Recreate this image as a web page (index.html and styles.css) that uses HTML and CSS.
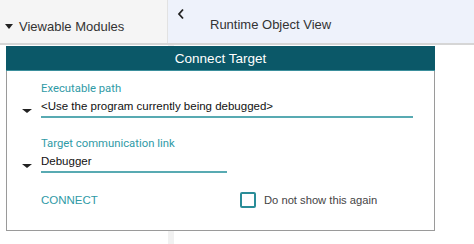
FILE: index.html
```html
<!DOCTYPE html>
<html lang="en">
<head>
    <meta charset="UTF-8">
    <meta name="viewport" content="width=device-width, initial-scale=1.0">
    <title>Connect Target</title>
    <link rel="stylesheet" href="styles.css">
</head>
<body>
    <div class="topbar">
        <div class="modules">
            <span class="caret"></span>
            <span>Viewable Modules</span>
        </div>
        <div class="runtime">
            <svg class="back" width="10" height="12" viewBox="0 0 10 12">
                <path d="M7 1.5 L3 6 L7 10.5" fill="none" stroke="#222" stroke-width="1.8"/>
            </svg>
            <span class="runtime-title">Runtime Object View</span>
        </div>
    </div>
    <div class="main">
        <div class="left-pane"></div>
        <div class="right-pane"></div>
    </div>

    <div class="dialog">
        <div class="dialog-header">Connect Target</div>
        <div class="dialog-body">
            <div class="field">
                <label class="field-label">Executable path</label>
                <div class="select-row">
                    <span class="caret small"></span>
                    <div class="select wide">&lt;Use the program currently being debugged&gt;</div>
                </div>
            </div>
            <div class="field">
                <label class="field-label">Target communication link</label>
                <div class="select-row">
                    <span class="caret small"></span>
                    <div class="select narrow">Debugger</div>
                </div>
            </div>
            <div class="actions">
                <span class="connect">CONNECT</span>
                <label class="check">
                    <span class="box"></span>
                    <span>Do not show this again</span>
                </label>
            </div>
        </div>
    </div>
</body>
</html>
```

FILE: styles.css
```css
body {
    margin: 0;
    padding: 0;
    width: 474px;
    height: 244px;
    overflow: hidden;
    font-family: "Liberation Sans", Arial, sans-serif;
    background-color: #fff;
    position: relative;
}
.topbar {
    display: flex;
    height: 43px;
    border-bottom: 2px solid #d6d6d6;
}
.modules {
    width: 168px;
    background-color: #f5f5f5;
    border-right: 1px solid #e2e2e2;
    display: flex;
    align-items: center;
    padding-left: 5px;
    padding-top: 10px;
    box-sizing: border-box;
    font-size: 13px;
    color: #333;
}
.caret {
    width: 0;
    height: 0;
    border-left: 4px solid transparent;
    border-right: 4px solid transparent;
    border-top: 5px solid #222;
    margin-right: 6px;
}
.runtime {
    flex: 1;
    background-color: #eef2fb;
    display: flex;
    align-items: flex-start;
    padding-left: 8px;
    padding-top: 7px;
    font-size: 13px;
    color: #333;
}
.back {
    margin-top: 1px;
}
.runtime-title {
    margin-left: 24px;
    margin-top: 10px;
}
.main {
    display: flex;
    height: 199px;
}
.left-pane {
    width: 168px;
    border-right: 6px solid #f1f1f1;
}
.right-pane {
    flex: 1;
}
.dialog {
    position: absolute;
    left: 6px;
    top: 46px;
    width: 429px;
    height: 185px;
    box-sizing: border-box;
    border: 1px solid #9a9a9a;
    border-top: none;
    background-color: #fff;
}
.dialog-header {
    height: 24px;
    margin: 0 -1px;
    background-color: #0b5868;
    color: #fff;
    font-size: 13.5px;
    line-height: 25px;
    text-align: center;
    border-bottom: 1px solid #3b8f9c;
}
.dialog-body {
    padding: 11px 0 0 15px;
}
.field {
    margin-bottom: 19px;
}
.field-label {
    display: block;
    margin-left: 19px;
    font-family: Roboto, sans-serif;
    font-size: 11.3px;
    color: #2f9aa6;
    line-height: 14px;
}
.select-row {
    display: flex;
    align-items: center;
    margin-top: 2px;
}
.caret.small {
    margin-right: 9px;
    margin-top: 5px;
    border-left-width: 5px;
    border-right-width: 5px;
    border-top-width: 4px;
}
.select {
    font-size: 11.5px;
    color: #111;
    line-height: 16px;
    padding-bottom: 2px;
    border-bottom: 2px solid #58aab2;
}
.wide {
    width: 372px;
}
.narrow {
    width: 186px;
}
.actions {
    display: flex;
    align-items: center;
    margin-top: 0;
    margin-left: 19px;
}
.connect {
    font-size: 11.5px;
    color: #2f9aa6;
    width: 199px;
}
.check {
    display: flex;
    align-items: center;
    font-size: 11.2px;
    color: #444;
}
.box {
    width: 12px;
    height: 12px;
    border: 2px solid #2a8d98;
    border-radius: 2px;
    margin-right: 8px;
}
```
